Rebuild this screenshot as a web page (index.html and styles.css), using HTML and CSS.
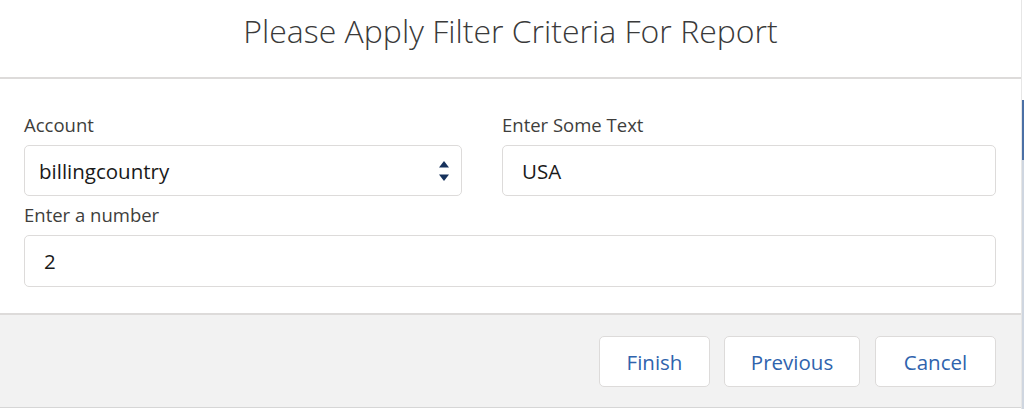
FILE: index.html
```html
<!DOCTYPE html>
<html>
<head>
<meta charset="utf-8">
<link rel="stylesheet" href="styles.css">
</head>
<body>
<div class="page">
  <div class="modal">
    <header class="modal-header">
      <h2 class="title">Please Apply Filter Criteria For Report</h2>
    </header>
    <section class="modal-body">
      <div class="form-grid">
        <div class="field">
          <label class="label">Account</label>
          <div class="control select">
            <span class="value">billingcountry</span>
            <svg class="arrows" width="12" height="22" viewBox="0 0 12 22">
              <path d="M6 1 L11 7.5 L1 7.5 Z" fill="#16325c"/>
              <path d="M6 21 L11 14.5 L1 14.5 Z" fill="#16325c"/>
            </svg>
          </div>
        </div>
        <div class="field">
          <label class="label">Enter Some Text</label>
          <div class="control input"><span class="value">USA</span></div>
        </div>
        <div class="field full">
          <label class="label">Enter a number</label>
          <div class="control input num"><span class="value">2</span></div>
        </div>
      </div>
    </section>
    <footer class="modal-footer">
      <button class="btn btn-finish">Finish</button>
      <button class="btn btn-prev">Previous</button>
      <button class="btn btn-cancel">Cancel</button>
    </footer>
  </div>
  <div class="edge"></div>
</div>
</body>
</html>
```
FILE: styles.css
```css
* { box-sizing: border-box; }
html, body { margin: 0; padding: 0; background: #ffffff; }
body {
  font-family: "Open Sans", Lato, "Liberation Sans", sans-serif;
  width: 1024px;
  height: 409px;
  overflow: hidden;
}
.page {
  display: flex;
  width: 1024px;
  height: 409px;
}
.modal {
  width: 1022px;
  display: flex;
  flex-direction: column;
  border-right: 1px solid #e6e6e6;
}
.edge {
  width: 2px;
  background: linear-gradient(to bottom, #ffffff 0, #ffffff 100px, #4a6fa5 100px, #4a6fa5 160px, #cfd6e0 160px);
}
.modal-header {
  height: 79px;
  border-bottom: 2px solid #dddbda;
  display: flex;
  align-items: center;
  justify-content: center;
  padding-bottom: 16px;
}
.title {
  margin: 0;
  font-weight: 300;
  font-size: 32px;
  color: #3a3a3a;
}
.modal-body {
  padding: 36px 25px 26px 24px;
  background: #ffffff;
}
.form-grid {
  display: grid;
  grid-template-columns: 438px 1fr;
  column-gap: 40px;
  row-gap: 9px;
}
.field.full { grid-column: 1 / span 2; }
.label {
  display: block;
  height: 20px;
  line-height: 20px;
  font-size: 18.5px;
  color: #3e3e3c;
  margin-bottom: 10px;
}
.control {
  height: 51px;
  border: 1px solid #dddbda;
  border-radius: 5px;
  background: #fff;
  display: flex;
  align-items: center;
  padding: 0 20px 0 14px;
  font-size: 20.5px;
  color: #1a1a1a;
}
.control.input { padding-left: 19px; }
.control.num { height: 52px; }
.select { justify-content: space-between; padding-right: 11px; }
.arrows { display: block; }
.modal-footer {
  flex: 1;
  background: #f2f2f2;
  border-top: 2px solid #dddbda;
  border-bottom: 1px solid #d6d6d6;
  display: flex;
  justify-content: flex-end;
  align-items: flex-start;
  padding: 21px 25px 0 0;
  gap: 14px;
  margin-bottom: 1px;
}
.btn {
  height: 51px;
  border: 1px solid #dddbda;
  border-radius: 5px;
  background: #ffffff;
  color: #2f63ad;
  font-family: "Open Sans", Lato, "Liberation Sans", sans-serif;
  font-size: 20.5px;
  padding: 0;
}
.btn-finish { width: 111px; }
.btn-prev { width: 136px; }
.btn-cancel { width: 121px; margin-left: 1px; }
```
